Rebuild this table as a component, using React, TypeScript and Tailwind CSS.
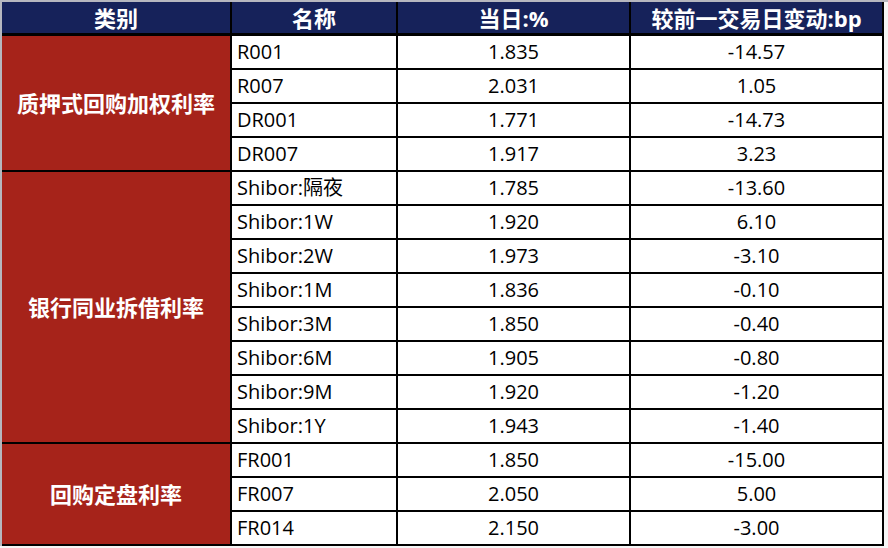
const groups: { name: string; rows: [string, string, string][] }[] = [
  {
    name: "质押式回购加权利率",
    rows: [
      ["R001", "1.835", "-14.57"],
      ["R007", "2.031", "1.05"],
      ["DR001", "1.771", "-14.73"],
      ["DR007", "1.917", "3.23"],
    ],
  },
  {
    name: "银行同业拆借利率",
    rows: [
      ["Shibor:隔夜", "1.785", "-13.60"],
      ["Shibor:1W", "1.920", "6.10"],
      ["Shibor:2W", "1.973", "-3.10"],
      ["Shibor:1M", "1.836", "-0.10"],
      ["Shibor:3M", "1.850", "-0.40"],
      ["Shibor:6M", "1.905", "-0.80"],
      ["Shibor:9M", "1.920", "-1.20"],
      ["Shibor:1Y", "1.943", "-1.40"],
    ],
  },
  {
    name: "回购定盘利率",
    rows: [
      ["FR001", "1.850", "-15.00"],
      ["FR007", "2.050", "5.00"],
      ["FR014", "2.150", "-3.00"],
    ],
  },
];

const spanClass: Record<number, string> = {
  3: "row-span-3",
  4: "row-span-4",
  8: "row-span-8",
};

export default function App() {
  return (
    <div
      className="w-[888px] h-[548px] overflow-hidden bg-[#f6f6f6] border-t-2 border-[#b6b7bf]"
      style={{ fontFamily: "'Open Sans', 'Noto Sans CJK SC', sans-serif" }}
    >
      <div className="w-[884px] border-l-2 border-[#b6b7bf]">
        <div className="grid grid-cols-[228px_164px_231px_251px] auto-rows-[32px] gap-[2px] bg-black pr-[2px] pb-[2px] w-[882px]">
          {["类别", "名称", "当日:%", "较前一交易日变动:bp"].map((h) => (
            <div
              key={h}
              className="h-[31px] -mb-[1px] bg-[#16225a] flex items-center justify-center text-white font-bold text-[22px] leading-none"
            >
              {h}
            </div>
          ))}
          {groups.map((g) => (
            <>
              <div
                key={g.name}
                className={
                  spanClass[g.rows.length] +
                  " bg-[#a6231a] flex items-center justify-center text-white font-bold text-[22px] leading-none"
                }
              >
                {g.name}
              </div>
              {g.rows.map((r, i) => (
                <>
                  <div
                    key={g.name + i + "a"}
                    className="bg-white flex items-center pl-[5px] text-[20px] text-black leading-none"
                  >
                    {r[0]}
                  </div>
                  <div
                    key={g.name + i + "b"}
                    className="bg-white flex items-center justify-center text-[20px] text-black leading-none"
                  >
                    {r[1]}
                  </div>
                  <div
                    key={g.name + i + "c"}
                    className="bg-white flex items-center justify-center text-[20px] text-black leading-none"
                  >
                    {r[2]}
                  </div>
                </>
              ))}
            </>
          ))}
        </div>
      </div>
    </div>
  );
}
